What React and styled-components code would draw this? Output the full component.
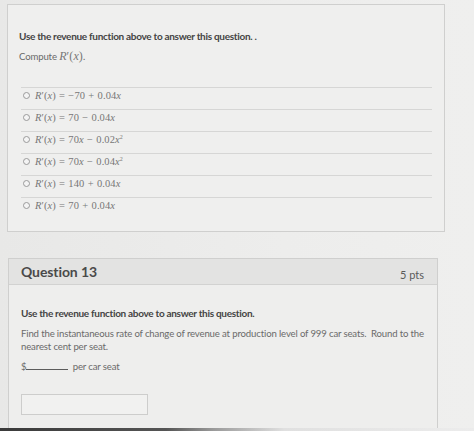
import React from "react";
import styled, { createGlobalStyle } from "styled-components";

const GlobalStyle = createGlobalStyle`
  html, body {
    margin: 0;
    padding: 0;
    background: #ebebea;
  }
  body {
    font-family: Lato, "Open Sans", sans-serif;
  }
`;

const opciones = [
  { id: 1, rhs: ["−70 + 0.04", "x"] },
  { id: 2, rhs: ["70 − 0.04", "x"] },
  { id: 3, rhs: ["70", "x", " − 0.02", "x", "2"] },
  { id: 4, rhs: ["70", "x", " − 0.04", "x", "2"] },
  { id: 5, rhs: ["140 + 0.04", "x"] },
  { id: 6, rhs: ["70 + 0.04", "x"] },
];

const Math = ({ parts }) => (
  <MathText>
    <i>R</i>′(<i>x</i>) = {parts[0]}
    <i>{parts[1]}</i>
    {parts[2]}
    {parts[3] && <i>{parts[3]}</i>}
    {parts[4] && <sup>{parts[4]}</sup>}
  </MathText>
);

export default function App() {
  return (
    <>
      <GlobalStyle />
      <Pagina>
        <Contenido>
          <Tarjeta>
            <Parrafo $oscuro>
              Use the revenue function above to answer this question. .
            </Parrafo>
            <Parrafo>
              Compute{" "}
              <MathText $grande>
                <i>R</i>′(<i>x</i>)
              </MathText>
              .
            </Parrafo>
            <ListaOpciones>
              {opciones.map((op) => (
                <Opcion key={op.id}>
                  <Radio />
                  <Math parts={op.rhs} />
                </Opcion>
              ))}
            </ListaOpciones>
          </Tarjeta>

          <Pregunta>
            <Cabecera>
              <h3>Question 13</h3>
              <span>5 pts</span>
            </Cabecera>
            <Cuerpo>
              <Parrafo $oscuro>
                Use the revenue function above to answer this question.
              </Parrafo>
              <Parrafo>
                Find the instantaneous rate of change of revenue at production
                level of 999 car seats.&nbsp; Round to the nearest cent per seat.
              </Parrafo>
              <Parrafo>
                $<Blanco /> per car seat
              </Parrafo>
              <Respuesta />
            </Cuerpo>
          </Pregunta>
        </Contenido>
        <BarraInferior />
      </Pagina>
    </>
  );
}

const Pagina = styled.div`
  height: 431px;
  display: flex;
  flex-direction: column;
  overflow: hidden;
`;

const Contenido = styled.div`
  flex: 1;
  overflow: hidden;
  padding: 4px 0 0 7px;
  background: linear-gradient(90deg, #e8e8e7 0, #ededec 60%, #efefee 100%);
`;

const Tarjeta = styled.section`
  width: 438px;
  box-sizing: border-box;
  border: 1px solid #cfcfce;
  background: #efefee;
  padding: 25px 12px 12px 11px;
`;

const Parrafo = styled.p`
  margin: 0 0 7px;
  font-size: ${(p) => (p.$oscuro ? "10px" : "9.6px")};
  line-height: 13px;
  color: ${(p) => (p.$oscuro ? "#444444" : "#6a6a6a")};
  font-weight: ${(p) => (p.$oscuro ? 700 : 400)};
  letter-spacing: ${(p) => (p.$oscuro ? "-0.3px" : "-0.15px")};
`;

const MathText = styled.span`
  font-family: "Liberation Serif", "DejaVu Serif", serif;
  font-size: ${(p) => (p.$grande ? "12px" : "10.5px")};
  color: #777777;
  white-space: nowrap;
  word-spacing: 0.5px;
  letter-spacing: 0.1px;
  sup {
    font-size: 6px;
    line-height: 0;
  }
`;

const ListaOpciones = styled.ul`
  list-style: none;
  margin: 24px 0 0 2px;
  padding: 0;
`;

const Opcion = styled.li`
  display: flex;
  align-items: center;
  gap: 5px;
  height: 22px;
  box-sizing: border-box;
  padding: 1px 0 7px 2px;
  border-top: 1px solid #d6d6d5;
`;

const Radio = styled.span`
  width: 5px;
  height: 5px;
  border: 1px solid #9a9a9a;
  border-radius: 50%;
  background: #f4f4f4;
`;

const Pregunta = styled.section`
  margin-top: 26px;
  margin-left: 1px;
  width: 430px;
  box-sizing: border-box;
  border: 1px solid #cfcfce;
  border-bottom: none;
  background: #eeeeed;
  height: 200px;
`;

const Cabecera = styled.header`
  display: flex;
  align-items: center;
  justify-content: space-between;
  height: 25px;
  padding: 0 13px 0 12px;
  background: #e3e3e2;
  border-bottom: 1px solid #d2d2d1;
  h3 {
    margin: 0;
    font-size: 14px;
    font-weight: 700;
    color: #4a4a4a;
    letter-spacing: -0.1px;
  }
  span {
    font-size: 11px;
    color: #5a5a5a;
    padding-top: 5px;
  }
`;

const Cuerpo = styled.div`
  padding: 22px 10px 0 12px;
  ${Parrafo} {
    margin-bottom: 7px;
  }
`;

const Blanco = styled.span`
  display: inline-block;
  width: 42px;
  border-bottom: 1px solid #5c5c5c;
  margin-right: 2px;
`;

const Respuesta = styled.div`
  margin-top: 21px;
  width: 127px;
  height: 21px;
  box-sizing: border-box;
  border: 1px solid #cdcdcc;
  background: #f1f1f0;
`;

const BarraInferior = styled.div`
  height: 3px;
  background: linear-gradient(90deg, #3a3a3a 0, #555 35%, #9a9a9a 45%, #e0e0e0 60%, #ececec 100%);
`;
